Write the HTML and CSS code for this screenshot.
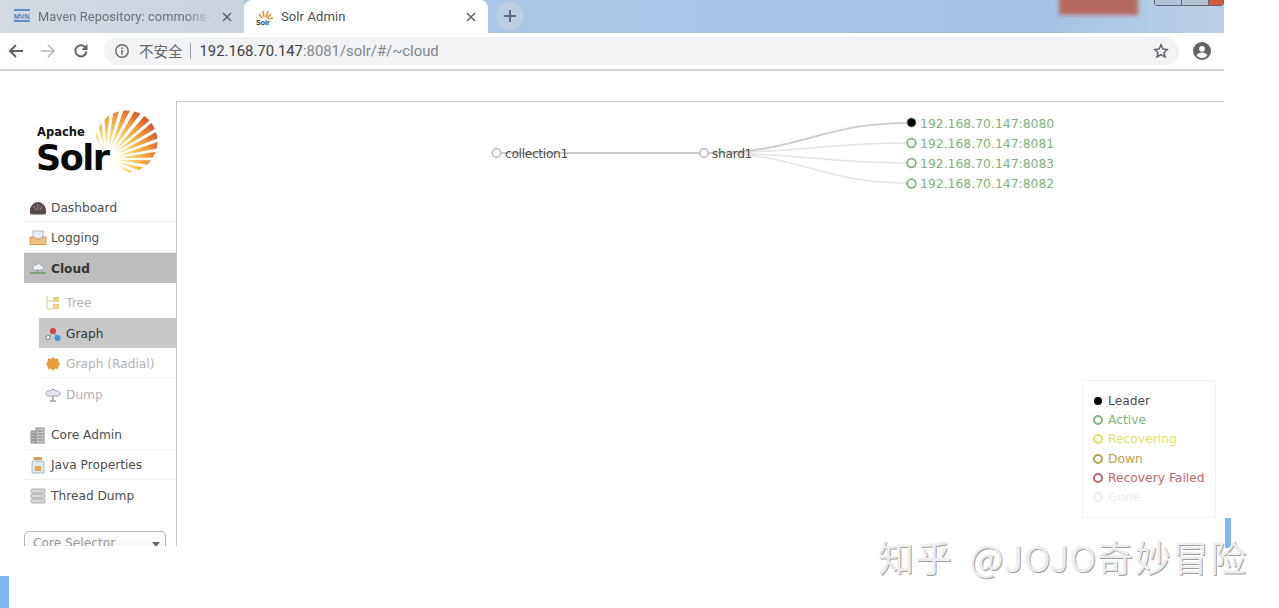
FILE: index.html
```html
<!DOCTYPE html>
<html lang="zh">
<head>
<meta charset="utf-8">
<title>Solr Admin</title>
<link rel="stylesheet" href="styles.css">
</head>
<body>
<div class="frame">
  <header class="tabstrip">
    <div class="tab tab-back">
      <svg class="fav" width="16" height="16" viewBox="0 0 16 16"><rect x="0" y="1" width="16" height="2" fill="#5a8fd0"/><rect x="0" y="12" width="16" height="2" fill="#5a8fd0"/></svg>
      <span class="fav-mvn">MVN</span>
      <span class="tab-title tab-title-dim">Maven Repository: commons-</span>
      <svg class="close" width="10" height="10" viewBox="0 0 10 10"><path d="M1 1l8 8M9 1l-8 8" stroke="#5f6368" stroke-width="1.5"/></svg>
    </div>
    <div class="tab tab-active">
      <svg class="fav-solr" width="18" height="18" viewBox="0 0 18 18">
        <g stroke="#e8912f" stroke-width="1.6"><path d="M6 10L3 6M8 9L7 3M10 9l2-6M11 10l4-4M12 11l5-1" /></g>
        <text x="0" y="17" class="fav-solr-text">Solr</text>
      </svg>
      <span class="tab-title">Solr Admin</span>
      <svg class="close" width="10" height="10" viewBox="0 0 10 10"><path d="M1 1l8 8M9 1l-8 8" stroke="#5f6368" stroke-width="1.5"/></svg>
    </div>
    <div class="newtab"><svg width="14" height="14" viewBox="0 0 14 14"><path d="M7 1v12M1 7h12" stroke="#5f6d7a" stroke-width="2"/></svg></div>
    <div class="blur-block"></div>
    <div class="winbtns"><span class="wb"></span><span class="wb"></span><span class="wb wb-red"></span></div>
  </header>

  <div class="toolbar">
    <svg class="navicon" width="16" height="16" viewBox="0 0 16 16"><path d="M15 8H2.500M8 2L2 8l6 6" fill="none" stroke="#5f6368" stroke-width="2"/></svg>
    <svg class="navicon navicon-gap" width="16" height="16" viewBox="0 0 16 16"><path d="M1 8h12.500M8 2l6 6-6 6" fill="none" stroke="#b5b8bb" stroke-width="1.6"/></svg>
    <svg class="navicon navicon-gap navicon-reload" width="16" height="16" viewBox="0 0 16 16"><path d="M13.500 8.500A5.600 5.600 0 1 1 12 3.900" fill="none" stroke="#5f6368" stroke-width="2"/><path d="M14.500 1v6h-6z" fill="#5f6368"/></svg>
    <div class="omnibox">
      <svg class="info" width="16" height="16" viewBox="0 0 16 16"><circle cx="8" cy="8" r="6.200" fill="none" stroke="#5f6368" stroke-width="1.4"/><path d="M8 7v4.500M8 4.400v1.500" stroke="#5f6368" stroke-width="1.5"/></svg>
      <span class="insecure">不安全</span>
      <span class="sep"></span>
      <span class="url"><span class="url-host">192.168.70.147</span>:8081/solr/#/~cloud</span>
      <svg class="star" width="16" height="16" viewBox="0 0 16 16"><path d="M8 1.800l1.900 4.200 4.500.5-3.400 3 1 4.500L8 11.600 4 14l1-4.500-3.400-3 4.500-.5z" fill="none" stroke="#5f6368" stroke-width="1.5"/></svg>
    </div>
    <svg class="avatar" width="18" height="18" viewBox="0 0 18 18"><circle cx="9" cy="9" r="9" fill="#5f6368"/><circle cx="9" cy="6.800" r="2.900" fill="#fff"/><path d="M3.600 13.400c1-2.200 3.200-3 5.400-3s4.400.8 5.400 3A7 7 0 0 1 9 16a7 7 0 0 1-5.400-2.600z" fill="#fff"/></svg>
  </div>

  <div class="main">
    <aside class="sidebar">
      <div class="logo">
        <svg width="130" height="74" viewBox="0 0 130 74">
          <defs>
            <radialGradient id="sun" gradientUnits="userSpaceOnUse" cx="0" cy="0" r="60">
              <stop offset="0.2" stop-color="#fff2c0"/>
              <stop offset="0.48" stop-color="#fbc650"/>
              <stop offset="0.74" stop-color="#f0913a"/>
              <stop offset="1" stop-color="#cc4a2c"/>
            </radialGradient>
            <clipPath id="disc"><circle cx="94.500" cy="40.500" r="31"/></clipPath>
            <polygon id="ray" points="0,-10 5,-80 -5,-80"/>
          </defs>
          <g clip-path="url(#disc)" fill="url(#sun)">
            <use href="#ray" transform="translate(74 58) rotate(-22)"/>
            <use href="#ray" transform="translate(74 58) rotate(-10)"/>
            <use href="#ray" transform="translate(74 58) rotate(1)"/>
            <use href="#ray" transform="translate(74 58) rotate(12)"/>
            <use href="#ray" transform="translate(74 58) rotate(23)"/>
            <use href="#ray" transform="translate(74 58) rotate(34)"/>
            <use href="#ray" transform="translate(74 58) rotate(45)"/>
            <use href="#ray" transform="translate(74 58) rotate(55)"/>
            <use href="#ray" transform="translate(74 58) rotate(65)"/>
            <use href="#ray" transform="translate(74 58) rotate(75)"/>
            <use href="#ray" transform="translate(74 58) rotate(85)"/>
            <use href="#ray" transform="translate(74 58) rotate(95)"/>
            <use href="#ray" transform="translate(74 58) rotate(106)"/>
            <use href="#ray" transform="translate(74 58) rotate(118)"/>
          </g>
          <text x="5" y="35" class="logo-apache">Apache</text>
          <text x="4" y="69" class="logo-solr">Solr</text>
        </svg>
      </div>
      <ul class="nav">
        <li class="row"><svg class="ic" width="18" height="16" viewBox="0 0 18 16"><path d="M1 13C0 6 5 2 9 2s9 4 8 11c0 1-1 1.500-2 1.500H3C2 14.500 1 14 1 13z" fill="#5b4a4a"/><path d="M5 6l2 4M9 4v6M13 6l-2 4" stroke="#9a8a8a" stroke-width="1"/></svg>Dashboard</li>
        <li class="row"><svg class="ic" width="18" height="16" viewBox="0 0 18 16"><rect x="4" y="1" width="10" height="8" fill="#e6eef5" stroke="#a9b9c8"/><path d="M1 7h4l1.500 2h5L13 7h4v7.500H1z" fill="#f0c283" stroke="#d29a4e"/></svg>Logging</li>
        <li class="row row-current"><svg class="ic" width="18" height="16" viewBox="0 0 18 16"><path d="M4 8a3 3 0 0 1 3-4 3.500 3.500 0 0 1 6 1 2.500 2.500 0 0 1 1 4H4.500A1.500 1.500 0 0 1 4 8z" fill="#eef2f5" stroke="#99a3ab"/><path d="M1 12h16" stroke="#6f9a63" stroke-width="1.500"/><path d="M9 9v3" stroke="#777"/></svg>Cloud</li>
      </ul>
      <ul class="nav subnav">
        <li class="row row-dim"><svg class="ic" width="16" height="16" viewBox="0 0 16 16"><path d="M2 1v13h6M2 6h6" fill="none" stroke="#d9c9a0"/><rect x="8" y="2" width="6" height="5" fill="#efcf85"/><rect x="8" y="9" width="6" height="5" fill="#efcf85"/></svg>Tree</li>
        <li class="row row-selected"><svg class="ic" width="16" height="16" viewBox="0 0 16 16"><path d="M3.500 11.500L8 5l4.500 7" fill="none" stroke="#8a8a8a"/><circle cx="3" cy="11.500" r="2" fill="#fff" stroke="#7a7a7a"/><circle cx="8" cy="5" r="3" fill="#d2404a"/><circle cx="12.500" cy="12" r="3" fill="#4a90cc"/></svg>Graph</li>
        <li class="row row-dim"><svg class="ic" width="16" height="16" viewBox="0 0 16 16"><path d="M8 1l2 2 3-.5.500 3L15 8l-1.500 2-.5 3-3-.5-2 2.500-2-2.500-3 .5-.5-3L1 8l1.500-2.500L3 2.500l3 .5z" fill="#ea9b3d"/></svg>Graph (Radial)</li>
        <li class="row row-dim"><svg class="ic" width="16" height="16" viewBox="0 0 16 16"><path d="M1 7a3 3 0 0 1 4-3 3.500 3.500 0 0 1 6 0 3 3 0 0 1 4 3c0 1-1 2-3 2H4C2 9 1 8 1 7z" fill="#e6e3ee" stroke="#a09bb5"/><path d="M8 9v5M5 14h6" stroke="#a09bb5" stroke-width="1.500"/></svg>Dump</li>
      </ul>
      <ul class="nav nav-lower">
        <li class="row"><svg class="ic" width="18" height="18" viewBox="0 0 18 18"><rect x="2" y="5" width="5" height="12" fill="#b9bdb8" stroke="#8c908c"/><rect x="7" y="2" width="8" height="15" fill="#c9ccc8" stroke="#8c908c"/><path d="M8.500 5h5M8.500 8h5M8.500 11h5M8.500 14h5M3 8h3M3 11h3M3 14h3" stroke="#777"/></svg>Core Admin</li>
        <li class="row"><svg class="ic" width="18" height="18" viewBox="0 0 18 18"><rect x="5" y="1" width="8" height="3" fill="#c9a257"/><path d="M4 5h10l1 2v10H3V7z" fill="#dfe9f2" stroke="#a9b9c8"/><rect x="6" y="10" width="6" height="5" fill="#e5ab58"/></svg>Java Properties</li>
        <li class="row"><svg class="ic" width="18" height="18" viewBox="0 0 18 18"><rect x="2" y="2" width="14" height="4" rx="1" fill="#dadada" stroke="#aaa"/><rect x="2" y="7" width="14" height="4" rx="1" fill="#dadada" stroke="#aaa"/><rect x="2" y="12" width="14" height="4" rx="1" fill="#dadada" stroke="#aaa"/></svg>Thread Dump</li>
      </ul>
      <div class="core-selector"><span>Core Selector</span><i class="caret"></i></div>
    </aside>

    <section class="content">
      <svg class="graph" width="1047" height="120" viewBox="177 102 1047 120">
        <g fill="none" stroke="#e4e4e4" stroke-width="1.500">
          <path d="M708 153C800 153 820 143 908 143"/>
          <path d="M708 153C800 153 820 163 908 163"/>
          <path d="M708 153C800 153 820 183 908 183"/>
        </g>
        <g fill="none" stroke="#cfcfcf" stroke-width="2">
          <path d="M500 153H700"/>
          <path d="M708 153C800 153 820 123 908 123"/>
        </g>
        <circle class="n n-grey" cx="496.500" cy="153" r="4.300"/>
        <circle class="n n-grey" cx="704" cy="153" r="4.300"/>
        <circle class="n n-leader" cx="911.500" cy="122.500" r="4.500"/>
        <circle class="n n-green" cx="911.500" cy="143" r="4.300"/>
        <circle class="n n-green" cx="911.500" cy="163" r="4.300"/>
        <circle class="n n-green" cx="911.500" cy="183.500" r="4.300"/>
        <text class="label label-node" x="505" y="158">collection1</text>
        <text class="label label-node" x="712" y="158">shard1</text>
        <text class="label label-green" x="920" y="128">192.168.70.147:8080</text>
        <text class="label label-green" x="920" y="148">192.168.70.147:8081</text>
        <text class="label label-green" x="920" y="168">192.168.70.147:8083</text>
        <text class="label label-green" x="920" y="188">192.168.70.147:8082</text>
      </svg>
      <ul class="legend">
        <li class="lg lg-leader"><i></i>Leader</li>
        <li class="lg lg-active"><i></i>Active</li>
        <li class="lg lg-recovering"><i></i>Recovering</li>
        <li class="lg lg-down"><i></i>Down</li>
        <li class="lg lg-failed"><i></i>Recovery Failed</li>
        <li class="lg lg-gone"><i></i>Gone</li>
      </ul>
    </section>
  </div>
</div>
<div class="bar-left"></div>
<div class="bar-right"></div>
<div class="watermark">知乎 <span class="wm-latin">@JOJO</span>奇妙冒险</div>
</body>
</html>
```
FILE: styles.css
```css
* { box-sizing: border-box; }
html, body { margin: 0; padding: 0; height: 608px; overflow: hidden; background: #fff; }
body { position: relative; font-family: "DejaVu Sans", sans-serif; }
ul { list-style: none; margin: 0; padding: 0; }

.frame { width: 1224px; height: 546px; overflow: hidden; background: #fff; }

/* Browser chrome */
.tabstrip {
  position: relative;
  display: flex;
  align-items: flex-end;
  height: 33px;
  background: linear-gradient(90deg, #a9c6e6 0, #a9c6e6 40%, #a6c5e6 70%, #a5c4e5 86%, #bcd1e8 100%);
}
.tab {
  position: relative;
  display: flex;
  align-items: center;
  width: 244px;
  height: 33px;
  padding-left: 14px;
  font-family: Roboto, "Liberation Sans", sans-serif;
  font-size: 13px;
  flex: none;
}
.tab-back { background: linear-gradient(90deg, #d4dae2, #cbd3dd); }
.tab-active { background: #fff; border-radius: 8px 8px 0 0; color: #4a4d50; padding-left: 12px; }
.fav { position: absolute; left: 14px; top: 8px; }
.fav-mvn { width: 16px; margin-right: 8px; font: 700 7px "Liberation Sans", sans-serif; color: #4a80c4; }
.fav-solr { margin-right: 7px; flex: none; }
.fav-solr-text { font: 700 7px "Liberation Sans", sans-serif; fill: #333; }
.tab-title { white-space: nowrap; overflow: hidden; letter-spacing: .1px; }
.tab-title-dim {
  width: 174px; color: #6b7078; font-size: 12.800px;
  -webkit-mask-image: linear-gradient(90deg, #000 85%, transparent 100%);
  mask-image: linear-gradient(90deg, #000 85%, transparent 100%);
}
.close { position: absolute; left: 222px; top: 12px; }
.newtab {
  display: flex; align-items: center; justify-content: center;
  width: 28px; height: 28px; margin: 0 0 3px 8px; border-radius: 50%; background: #bbcee1;
  flex: none;
}
.blur-block {
  position: absolute; left: 1059px; top: -6px; width: 79px; height: 21px;
  background: #b5685f; filter: blur(2px);
}
.winbtns { position: absolute; left: 1154px; top: -6px; display: flex; width: 70px; height: 12px; border: 1px solid #5d6670; border-radius: 3px; overflow: hidden; }
.wb { flex: 1; background: #b3c4d6; border-right: 1px solid #667; }
.wb-red { flex: none; width: 14px; background: #d2593b; border: 0; }

.toolbar {
  display: flex;
  align-items: center;
  height: 38px;
  padding: 0 13px 1px 8px;
  background: #fff;
  border-bottom: 2px solid #d2d2d2;
}
.navicon-gap { margin-left: 16px; }
.navicon-reload { margin-left: 17px; }
.omnibox {
  display: flex; align-items: center;
  width: 1076px; height: 28px; margin-left: 15px; padding: 0 10px;
  border-radius: 14px; background: #f1f3f4;
  font-family: Roboto, "Noto Sans CJK SC", sans-serif;
}
.info { flex: none; }
.insecure { margin-left: 9px; font: 14.500px "Noto Sans CJK SC", sans-serif; color: #5f6368; }
.sep { width: 1px; height: 16px; margin: 0 8px; background: #9aa0a6; }
.url { flex: 1; font-size: 14.850px; color: #80868b; padding-top: 1px; }
.url-host { color: #3c4043; }
.star { flex: none; margin-left: 1px; }
.avatar { margin-left: 14px; flex: none; }

/* Page */
.main { display: flex; height: 475px; padding-top: 30px; }
.sidebar { flex: none; width: 176px; padding-left: 24px; overflow: hidden; }
.logo { height: 91px; padding-top: 0; }
.logo svg { display: block; margin-left: 8px; }
.logo-apache { font: 700 11.500px "DejaVu Sans", sans-serif; fill: #111; }
.logo-solr { font: 700 35px "DejaVu Sans", sans-serif; fill: #0a0a0a; letter-spacing: -1.500px; }

.row {
  display: flex; align-items: center;
  height: 30.400px;
  padding-left: 5px;
  padding-top: 2px;
  border-bottom: 1px solid #f0f0f0;
  color: #4d4d4d;
  font-size: 12.200px;
  white-space: nowrap;
}
.ic { flex: none; width: 18px; margin-right: 4px; }
.row-current { background: #bdbdbd; border-bottom: 0; font-weight: 700; color: #333; }
.subnav { margin: 4px 0 10.400px 15px; }
.subnav .row { padding-left: 6px; }
.subnav .ic { width: 16px; margin-right: 5px; }
.row-dim { color: #b3b3b3; }
.row-dim:first-child { border-bottom: 0; }
.row-dim:last-child { border-bottom: 0; }
.row-selected { background: #c8c8c8; color: #333; border-bottom: 0; }
.nav-lower .row:last-child { border-bottom: 0; }

.core-selector {
  display: flex; align-items: flex-start; justify-content: space-between;
  width: 142px; height: 30px; margin-top: 20.600px; padding: 4px 5px 0 8px;
  border: 1px solid #b5b5b5; border-radius: 5px;
  background: linear-gradient(#fff, #f0f0f0);
  color: #999; font-size: 12.200px;
}
.caret { margin-top: 6px; border: 4px solid transparent; border-top: 5px solid #666; border-bottom: 0; }

.content { position: relative; flex: 1; border-top: 1px solid #c4c4c4; border-left: 1px solid #c4c4c4; }
.graph { display: block; }
.n { fill: #fff; stroke-width: 1.500; }
.n-grey { stroke: #b9b9b9; }
.n-green { stroke: #80b27c; stroke-width: 1.800; }
.n-leader { fill: #000; stroke: #6d9d68; stroke-width: 1; }
.label { font: 12.400px "DejaVu Sans", sans-serif; }
.label-node { font-size: 12.200px; letter-spacing: -.3px; fill: #4d4d4d; }
.label-green { fill: #7fb27b; }

.legend {
  position: absolute; left: 905px; top: 278px;
  width: 134px; height: 138px;
  padding: 10px 0 0 10px;
  border: 1px solid #f2f2f2;
  font-size: 12.300px;
}
.lg { display: flex; align-items: center; height: 19.300px; white-space: nowrap; }
.lg i { width: 10px; height: 10px; margin-right: 5px; border-radius: 50%; border: 2px solid currentColor; flex: none; }
.lg-leader { color: #4d4d4d; }
.lg-leader i { background: #000; border-color: #000; width: 8px; height: 8px; margin: 0 6px 0 1px; }
.lg-active { color: #83b57f; }
.lg-recovering { color: #dfe45f; }
.lg-down { color: #bfa04a; }
.lg-failed { color: #c1666a; }
.lg-gone { color: #ececec; }

/* Over-page marks */
.bar-left { position: absolute; left: 0; top: 576px; width: 9px; height: 32px; background: #7db8ee; }
.bar-right { position: absolute; left: 1225px; top: 518px; width: 6px; height: 30px; background: #7db8ee; }
.watermark {
  position: absolute; left: 878px; top: 530px;
  font: 36px "Noto Sans CJK SC", sans-serif;
  letter-spacing: 1.800px;
  word-spacing: 6px;
  color: #ededed;
  text-shadow: 1px 1px 0 #9f9f9f;
  white-space: nowrap;
}
.wm-latin { letter-spacing: .6px; }
```
